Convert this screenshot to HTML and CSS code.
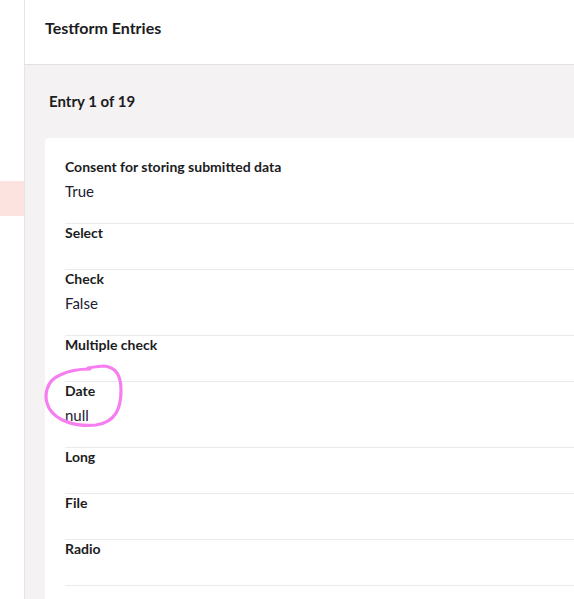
FILE: index.html
```html
<!DOCTYPE html>
<html>
<head>
<meta charset="utf-8">
<link rel="stylesheet" href="styles.css">
</head>
<body>
<div class="app">
  <aside class="sidebar">
    <div class="side-active"></div>
  </aside>
  <main class="main">
    <header class="header"><h1 class="title">Testform Entries</h1></header>
    <section class="content">
      <h2 class="entry-title">Entry 1 of 19</h2>
      <div class="card">
        <div class="row"><div class="label">Consent for storing submitted data</div><div class="value">True</div></div>
        <div class="row"><div class="label">Select</div><div class="value"></div></div>
        <div class="row"><div class="label">Check</div><div class="value">False</div></div>
        <div class="row"><div class="label">Multiple check</div><div class="value"></div></div>
        <div class="row"><div class="label">Date</div><div class="value">null</div></div>
        <div class="row"><div class="label">Long</div><div class="value"></div></div>
        <div class="row"><div class="label">File</div><div class="value"></div></div>
        <div class="row"><div class="label">Radio</div><div class="value"></div></div>
      </div>
    </section>
  </main>
</div>
<svg class="circle" width="90" height="72" viewBox="0 0 90 72">
  <path d="M48 8 C 54 7, 60 6, 64 6 C 76 7, 81 16, 81 30 C 81 48, 76 62, 56 65 C 36 67, 16 61, 9 48 C 3 36, 6 21, 20 15 C 28 11, 38 9, 50 9" fill="none" stroke="#f77ef0" stroke-width="3.2" stroke-linecap="round" stroke-linejoin="round"/>
</svg>
</body>
</html>
```
FILE: styles.css
```css
* { box-sizing: border-box; }
html, body { margin: 0; padding: 0; }
body {
  font-family: Lato, "Noto Sans", sans-serif;
  color: #1c1c22;
  background: #fff;
  overflow: hidden;
  width: 574px;
  height: 599px;
  position: relative;
}
.app { display: flex; height: 599px; overflow: hidden; }
.sidebar {
  width: 25px;
  flex: none;
  border-right: 1px solid #e6e4e4;
  background: #fff;
  padding-top: 181px;
}
.side-active { height: 35px; background: #fde3e0; }
.main { flex: 1; display: flex; flex-direction: column; min-width: 0; overflow: hidden; }
.header {
  flex: none;
  height: 65px;
  border-bottom: 1px solid #e2e0e0;
  padding: 0 20px 10px;
  display: flex;
  align-items: center;
  background: #fff;
}
.title { margin: 0; font-size: 16px; font-weight: 700; }
.content {
  flex: 1;
  display: flex;
  flex-direction: column;
  background: #f4f2f2;
  padding: 0 0 0 20px;
}
.entry-title {
  flex: none;
  margin: 0;
  padding: 26px 4px 0;
  height: 73px;
  font-size: 15px;
  font-weight: 700;
  line-height: 20px;
}
.card {
  flex: 1;
  background: #fff;
  border-radius: 4px 0 0 0;
  padding: 20px 0 0 20px;
  margin-right: -20px;
}
.row {
  border-bottom: 1px solid #ebe9e9;
  padding-bottom: 22px;
}
.label { font-size: 14px; font-weight: 700; line-height: 18px; margin-bottom: 5px; }
.value { font-size: 15px; line-height: 20px; color: #202032; }
.circle { position: absolute; left: 40px; top: 360px; }
```
